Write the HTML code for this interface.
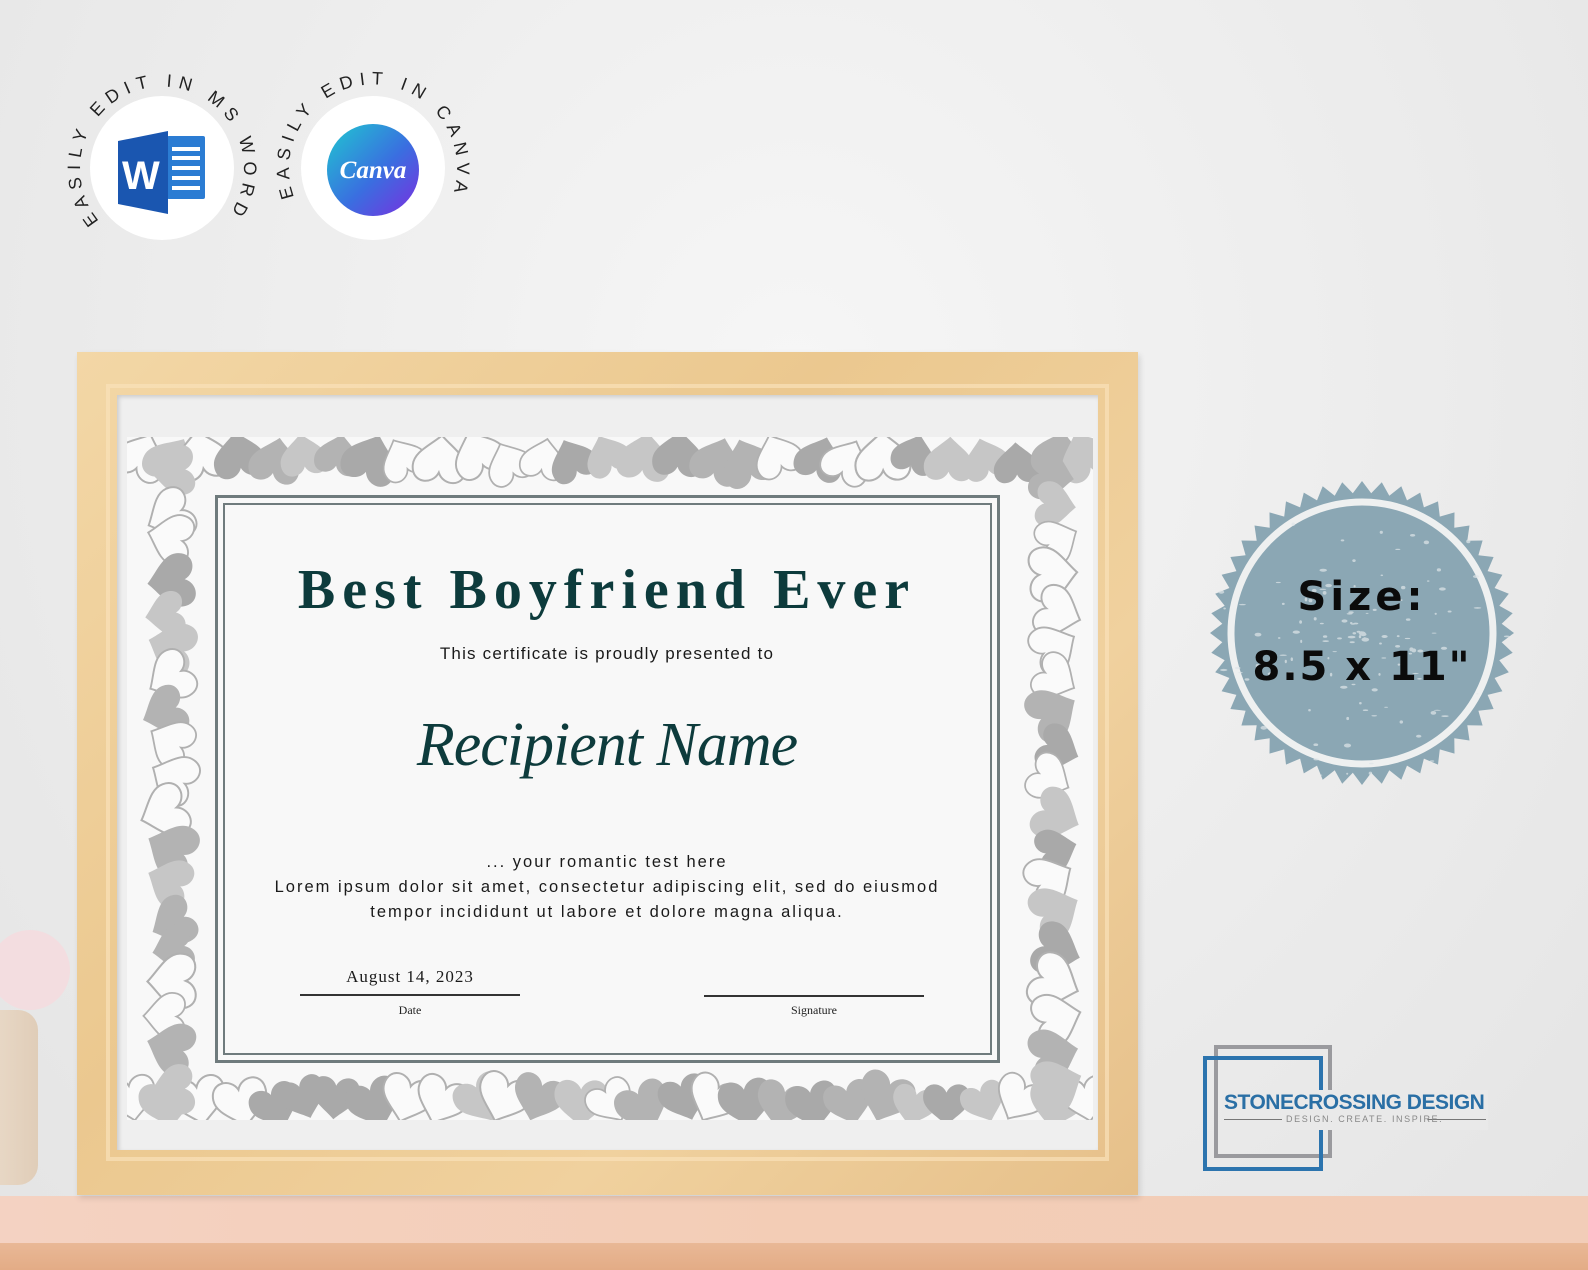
<!DOCTYPE html>
<html><head><meta charset="utf-8">
<style>
*{margin:0;padding:0;box-sizing:border-box}
body{width:1588px;height:1270px;overflow:hidden;position:relative;font-family:"Liberation Sans",sans-serif;
background:radial-gradient(ellipse at 50% 30%,#f6f6f6 0%,#ececec 55%,#e4e4e4 100%);}
.abs{position:absolute}
</style></head><body>

<div class="abs" style="left:0;top:1196px;width:1588px;height:48px;background:linear-gradient(90deg,#f4d2c2,#f3cdb6 50%,#f2cdb8);"></div>
<div class="abs" style="left:0;top:1243px;width:1588px;height:27px;background:linear-gradient(180deg,#e9b896,#e3ac86);"></div>

<div class="abs" style="left:-10px;top:930px;width:80px;height:80px;border-radius:50%;background:#f3dde0;"></div>
<div class="abs" style="left:-20px;top:1010px;width:58px;height:175px;border-radius:0 20px 20px 0;background:linear-gradient(90deg,#ebdccb,#e0cdb8);"></div>

<div class="abs" style="left:77px;top:352px;width:1061px;height:843px;background:linear-gradient(135deg,#f3d7a6,#ebc88f 40%,#f0d19e 70%,#e6c08a);box-shadow:2px 3px 6px rgba(0,0,0,.12)"></div>
<div class="abs" style="left:106px;top:384px;width:1003px;height:777px;border:4px solid rgba(250,225,185,.7)"></div>
<div class="abs" style="left:117px;top:395px;width:981px;height:755px;background:#efefef;box-shadow:inset 2px 2px 4px rgba(0,0,0,.15)"></div>
<div class="abs" style="left:127px;top:437px;width:966px;height:683px;background:#f8f8f8;"></div>

<svg class="abs" style="left:0;top:0" width="1588" height="1270">
 <defs>
  <path id="h" d="M0,-6 C-4,-16 -20,-16 -20,-2 C-20,8 -8,14 0,22 C8,14 20,8 20,-2 C20,-16 4,-16 0,-6Z"/>
  <clipPath id="band"><path fill-rule="evenodd" d="M127,437H1093V1120H127Z M210,488H1005V1068H210Z"/></clipPath>
 </defs>
 <g id="hearts" clip-path="url(#band)"></g>
 <rect x="216.5" y="496.5" width="782" height="565" fill="#f8f8f8" stroke="#6f7b7d" stroke-width="3"/>
 <rect x="224" y="504" width="767" height="550" fill="none" stroke="#6f7b7d" stroke-width="2"/>
</svg>

<div class="abs" style="left:216px;top:558px;width:782px;text-align:center;font-family:'Liberation Serif',serif;font-weight:bold;font-size:56px;color:#0d3b3c;letter-spacing:7px">Best Boyfriend Ever</div>
<div class="abs" style="left:216px;top:644px;width:782px;text-align:center;font-size:17px;color:#1a1a1a;letter-spacing:1.2px">This certificate is proudly presented to</div>
<div class="abs" style="left:216px;top:710px;width:782px;text-align:center;font-family:'Liberation Serif',serif;font-style:italic;font-size:62px;color:#0d3b3c;letter-spacing:-1px">Recipient Name</div>
<div class="abs" style="left:206px;top:850px;width:802px;text-align:center;font-size:16.5px;line-height:25px;color:#1a1a1a;letter-spacing:2px">... your romantic test here<br>Lorem ipsum dolor sit amet, consectetur adipiscing elit, sed do eiusmod<br>tempor incididunt ut labore et dolore magna aliqua.</div>
<div class="abs" style="left:300px;top:967px;width:220px;text-align:center;font-family:'Liberation Serif',serif;font-size:17px;color:#1a1a1a;letter-spacing:1px">August 14, 2023</div>
<div class="abs" style="left:300px;top:994px;width:220px;height:1.5px;background:#333"></div>
<div class="abs" style="left:704px;top:995px;width:220px;height:1.5px;background:#333"></div>
<div class="abs" style="left:300px;top:1003px;width:220px;text-align:center;font-family:'Liberation Serif',serif;font-size:12px;color:#222">Date</div>
<div class="abs" style="left:704px;top:1003px;width:220px;text-align:center;font-family:'Liberation Serif',serif;font-size:12px;color:#222">Signature</div>

<svg class="abs" style="left:0;top:0" width="500" height="260">
 <defs>
  <path id="arc1" d="M99,221 A82,82 0 1 1 225,221"/>
  <path id="arc2" d="M294,197 A84,84 0 1 1 452,197"/>
  <linearGradient id="cg" x1="0" y1="0" x2="1" y2="1"><stop offset="0" stop-color="#1fc8d0"/><stop offset=".55" stop-color="#3a6ee0"/><stop offset="1" stop-color="#7b2de0"/></linearGradient>
 </defs>
 <circle cx="162" cy="168" r="72" fill="#fff"/>
 <circle cx="373" cy="168" r="72" fill="#fff"/>
 <text font-family="Liberation Sans" font-size="18" fill="#222"><textPath href="#arc1" textLength="360" lengthAdjust="spacing">EASILY EDIT IN MS WORD</textPath></text>
 <text font-family="Liberation Sans" font-size="18" fill="#222"><textPath href="#arc2" textLength="316" lengthAdjust="spacing">EASILY EDIT IN CANVA</textPath></text>
 <rect x="167" y="136" width="38" height="63" rx="2" fill="#2b7cd3"/>
 <g fill="#fff"><rect x="172" y="147" width="28" height="4"/><rect x="172" y="156" width="28" height="4"/><rect x="172" y="166" width="28" height="4"/><rect x="172" y="176" width="28" height="4"/><rect x="172" y="186" width="28" height="4"/></g>
 <path d="M118,141 L168,131 L168,214 L118,204Z" fill="#1a56b0"/>
 <text x="122" y="189" font-family="Liberation Sans" font-weight="bold" font-size="40" fill="#fff">W</text>
 <circle cx="373" cy="170" r="46" fill="url(#cg)"/>
 <text x="373" y="178" text-anchor="middle" font-family="Liberation Serif" font-style="italic" font-weight="bold" font-size="25" fill="#fff">Canva</text>
</svg>

<svg class="abs" style="left:1200px;top:478px" width="320" height="320">
 <polygon id="star" fill="#8ba7b4"/>
 <circle cx="162" cy="155" r="131" fill="none" stroke="#eef0f0" stroke-width="7"/>
 <g id="spk" fill="#dfe6e9" opacity=".7"></g>
 <text x="162" y="132" text-anchor="middle" font-family="DejaVu Sans" font-weight="bold" font-size="40" letter-spacing="4" fill="#0b0b0b">Size:</text>
 <text x="162" y="202" text-anchor="middle" font-family="DejaVu Sans" font-weight="bold" font-size="40" letter-spacing="2" fill="#0b0b0b">8.5 x 11"</text>
</svg>

<div class="abs" style="left:1214px;top:1045px;width:118px;height:113px;border:4px solid #9a9a9e"></div>
<div class="abs" style="left:1203px;top:1056px;width:120px;height:115px;border:4px solid #2c74ae"></div>
<div class="abs" style="left:1222px;top:1090px;width:266px;height:40px;background:#e9e9e9"></div>
<div class="abs" style="left:1224px;top:1091px;font-weight:bold;font-size:21px;color:#2a6fa5;letter-spacing:-0.5px">STONECROSSING DESIGN</div>
<div class="abs" style="left:1224px;top:1119px;width:58px;height:1px;background:#777"></div>
<div class="abs" style="left:1428px;top:1119px;width:58px;height:1px;background:#777"></div>
<div class="abs" style="left:1286px;top:1114px;font-size:9px;color:#888;letter-spacing:1.6px">DESIGN. CREATE. INSPIRE.</div>

<script>
(function(){var p=[],n=48,cx=162,cy=155;for(var i=0;i<n*2;i++){var a=Math.PI*i/n,r=i%2?140:152;p.push((cx+r*Math.cos(a)).toFixed(1)+','+(cy+r*Math.sin(a)).toFixed(1));}
document.getElementById('star').setAttribute('points',p.join(' '));
var g=document.getElementById('spk'),s=7,h='';function rnd(){s=(s*9301+49297)%233280;return s/233280;}
for(var k=0;k<120;k++){var a=rnd()*6.283,r=rnd()*148,x=cx+r*Math.cos(a),y=cy+r*Math.sin(a);h+='<ellipse cx="'+x.toFixed(1)+'" cy="'+y.toFixed(1)+'" rx="'+(1+rnd()*3).toFixed(1)+'" ry="'+(0.5+rnd()*1.5).toFixed(1)+'"/>';}
g.innerHTML=h;
var hg=document.getElementById('hearts'),out='',cols=['#b3b3b3','#c6c6c6','#a9a9a9','none','none'];
function heart(x,y,rot,sc){var c=cols[Math.floor(rnd()*cols.length)];
 var st=c=='none'?'fill="#fafafa" stroke="#b0b0b0" stroke-width="1.5"':'fill="'+c+'"';
 out+='<use href="#h" '+st+' transform="translate('+x.toFixed(1)+','+y.toFixed(1)+') rotate('+rot.toFixed(0)+') scale('+sc.toFixed(2)+')"/>';}
for(var x=130;x<1100;x+=34){heart(x+rnd()*10,458+rnd()*10,180+rnd()*60-30,1.1+rnd()*0.3);heart(x+rnd()*10,1092+rnd()*10,rnd()*60-30,1.1+rnd()*0.3);}
for(var y=470;y<1090;y+=34){heart(168+rnd()*10,y+rnd()*10,90+rnd()*60-30,1.1+rnd()*0.3);heart(1045+rnd()*10,y+rnd()*10,-90+rnd()*60-30,1.1+rnd()*0.3);}
hg.innerHTML=out;})();
</script>
</body></html>
